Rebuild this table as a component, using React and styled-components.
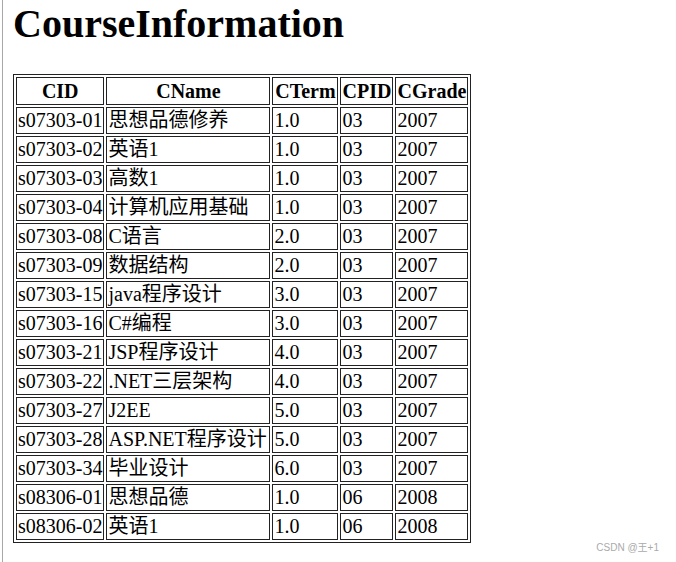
import React from "react";
import styled, { createGlobalStyle } from "styled-components";

const courses = [
    ["s07303-01", "思想品德修养", "1.0", "03", "2007"],
    ["s07303-02", "英语1", "1.0", "03", "2007"],
    ["s07303-03", "高数1", "1.0", "03", "2007"],
    ["s07303-04", "计算机应用基础", "1.0", "03", "2007"],
    ["s07303-08", "C语言", "2.0", "03", "2007"],
    ["s07303-09", "数据结构", "2.0", "03", "2007"],
    ["s07303-15", "java程序设计", "3.0", "03", "2007"],
    ["s07303-16", "C#编程", "3.0", "03", "2007"],
    ["s07303-21", "JSP程序设计", "4.0", "03", "2007"],
    ["s07303-22", ".NET三层架构", "4.0", "03", "2007"],
    ["s07303-27", "J2EE", "5.0", "03", "2007"],
    ["s07303-28", "ASP.NET程序设计", "5.0", "03", "2007"],
    ["s07303-34", "毕业设计", "6.0", "03", "2007"],
    ["s08306-01", "思想品德", "1.0", "06", "2008"],
    ["s08306-02", "英语1", "1.0", "06", "2008"],
];

// width of each column, border included
const columns = [
    { name: "CID", width: 88 },
    { name: "CName", width: 164 },
    { name: "CTerm", width: 66 },
    { name: "CPID", width: 53 },
    { name: "CGrade", width: 73 },
];

export default function App() {
    return (
        <Page>
            <GlobalStyle />
            <Title>CourseInformation</Title>
            <Table>
                <thead>
                    <tr>
                        {columns.map(c => <Th key={c.name} $w={c.width}>{c.name}</Th>)}
                    </tr>
                </thead>
                <tbody>
                    {courses.map(row => (
                        <tr key={row[0] + row[1]}>
                            {row.map((cell, i) => <Td key={i}>{cell}</Td>)}
                        </tr>
                    ))}
                </tbody>
            </Table>
            <Watermark>CSDN @王+1</Watermark>
        </Page>
    );
}

const GlobalStyle = createGlobalStyle`
body {
    margin: 0;
    background: #fff;
}
`

const Page = styled.div`
position: relative;
min-height: 562px;
box-sizing: border-box;
margin-left: 2px;
border-left: 1px solid #a8a8a8;
padding: 1px 0 0 10px;
font-family: "Liberation Serif", "Noto Sans CJK SC", serif;
color: #000;
`

const Title = styled.h1`
margin: 0 0 27px 0;
font-size: 40px;
font-weight: bold;
line-height: 46px;
`

const Table = styled.table`
border: 1px solid #222;
border-spacing: 2px;
font-size: 20px;
`

const Th = styled.th`
box-sizing: border-box;
width: ${p => p.$w}px;
border: 1px solid #222;
padding: 1px;
line-height: 24px;
font-weight: bold;
text-align: center;
white-space: nowrap;
`

const Td = styled.td`
border: 1px solid #222;
padding: 1px;
line-height: 23px;
text-align: left;
white-space: nowrap;
`

const Watermark = styled.div`
position: absolute;
right: 17px;
bottom: 8px;
font-family: "Liberation Sans", "Noto Sans CJK SC", sans-serif;
font-size: 10px;
color: #aaa;
`
